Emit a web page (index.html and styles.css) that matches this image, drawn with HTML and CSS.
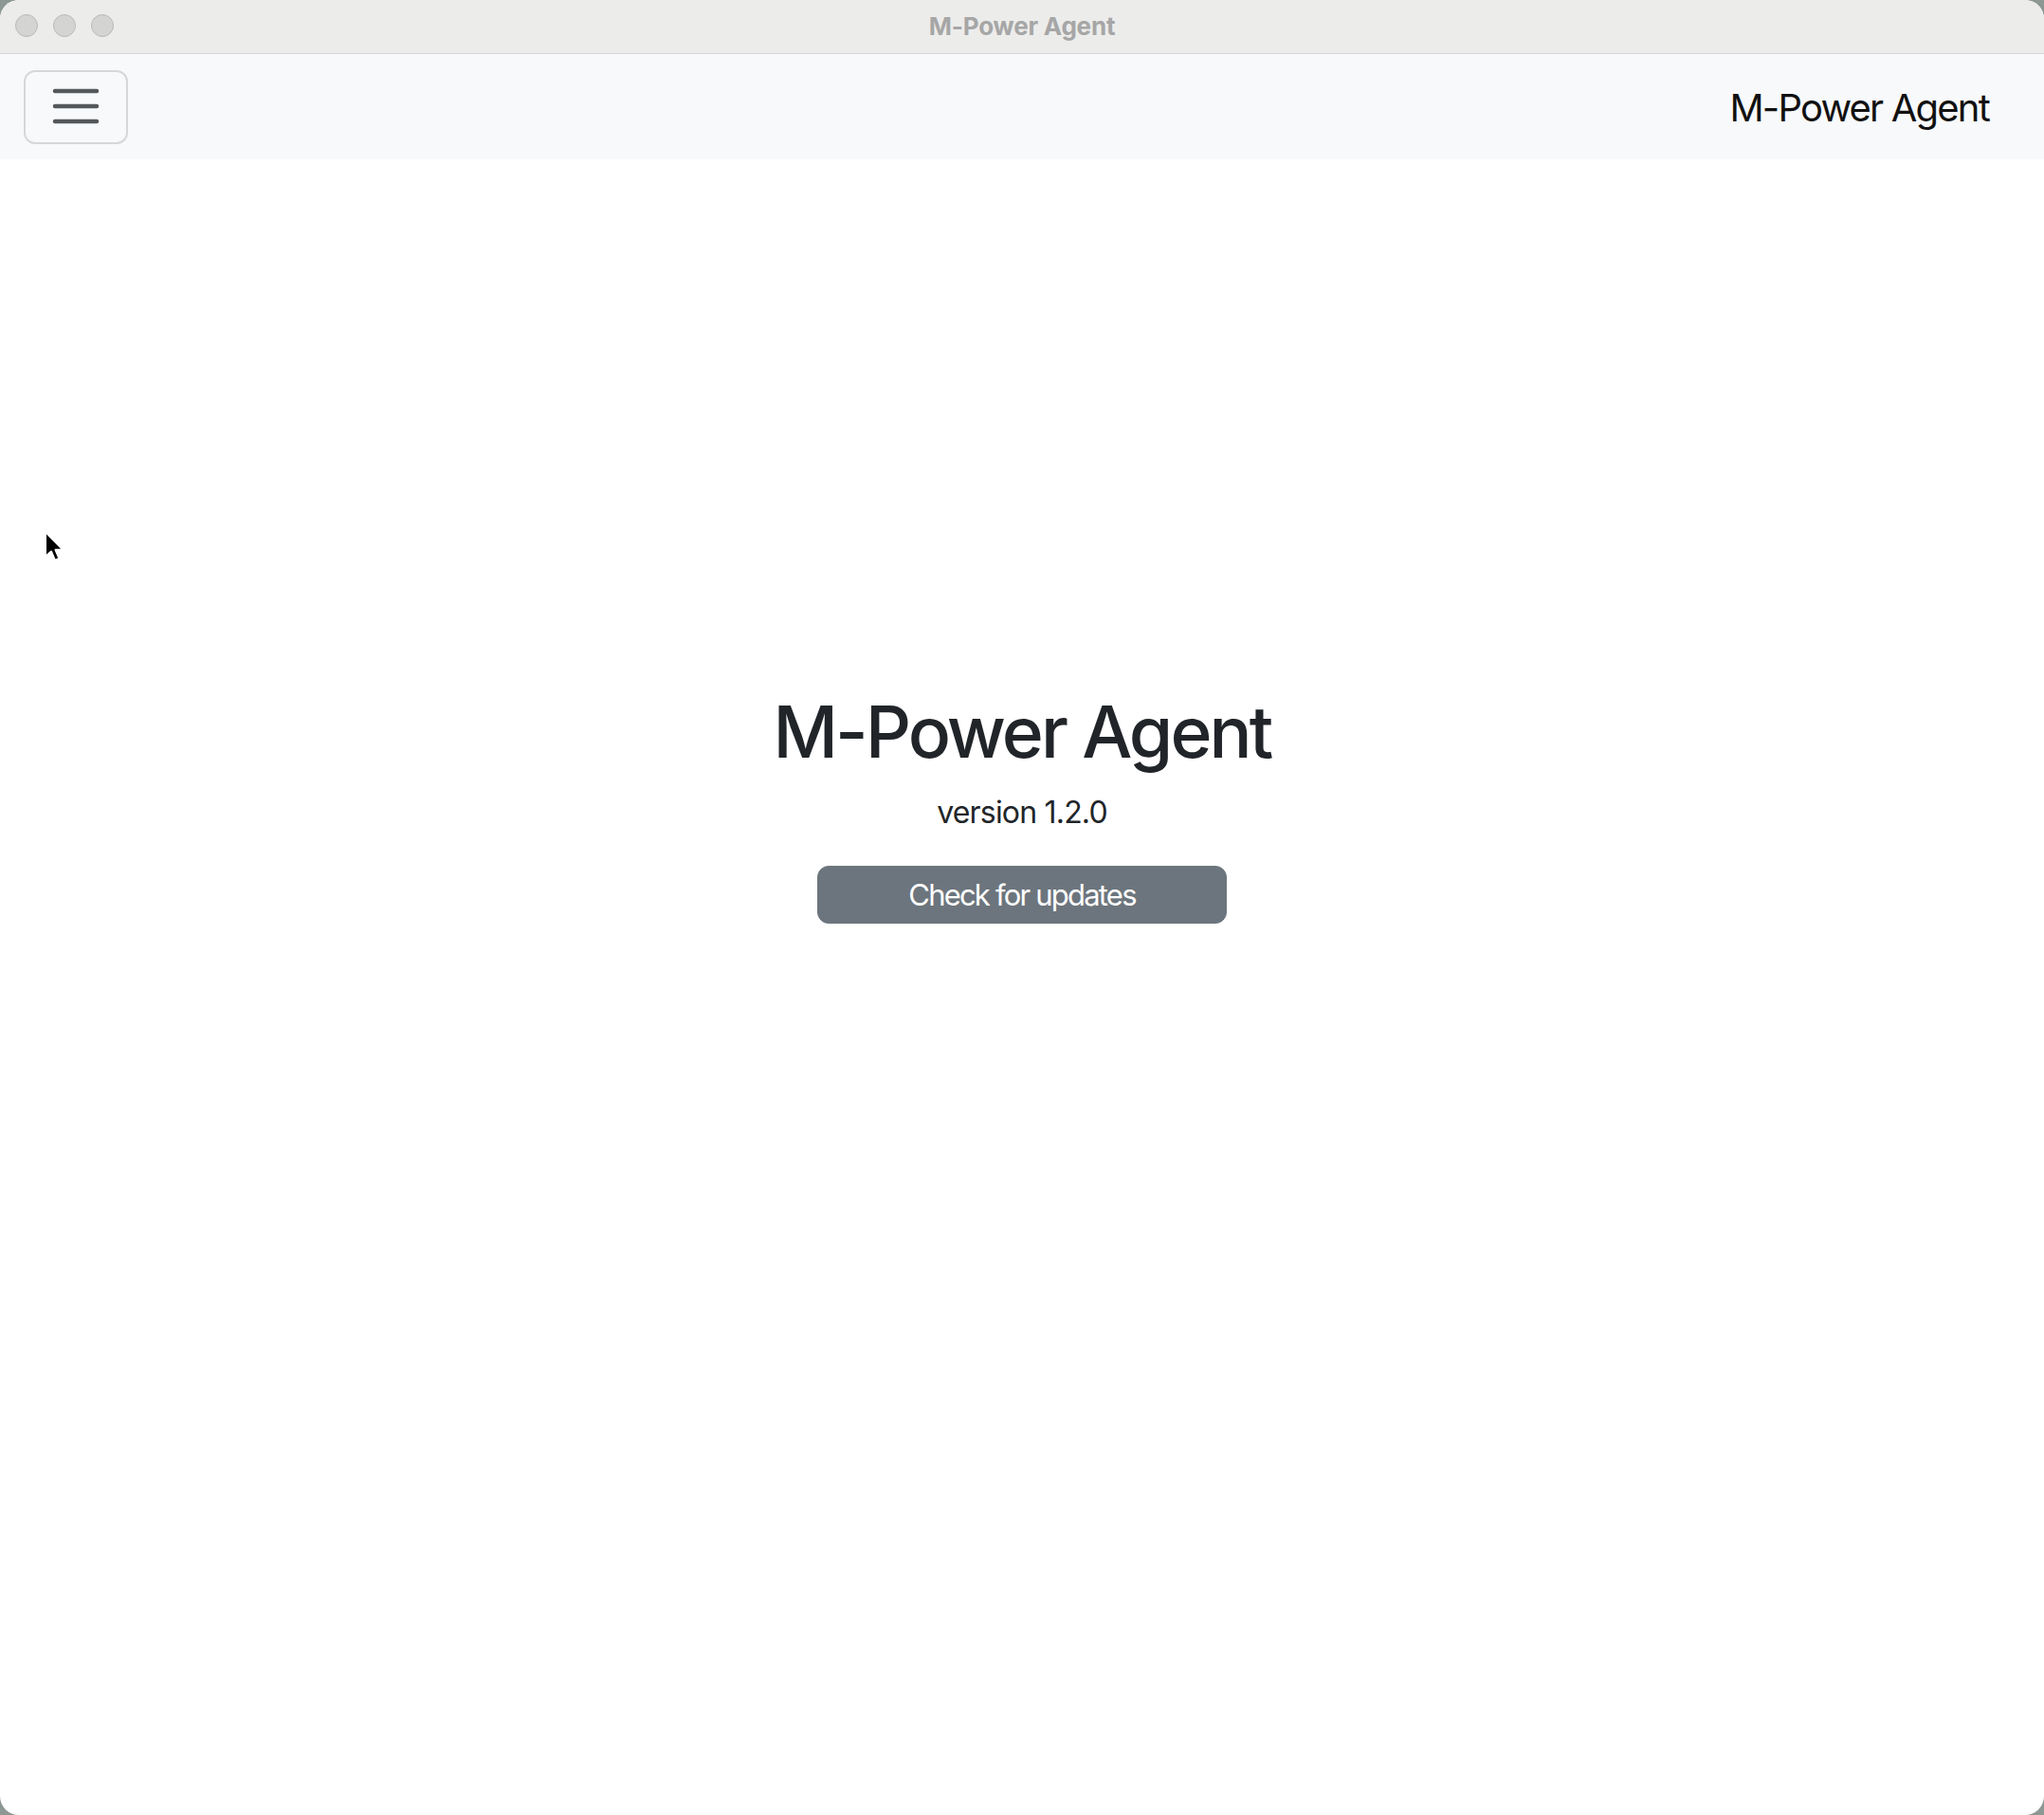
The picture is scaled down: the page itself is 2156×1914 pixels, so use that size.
FILE: index.html
```html
<!DOCTYPE html>
<html lang="en">
<head>
  <meta charset="UTF-8" />
  <title>M-Power Agent</title>
  <meta name="viewport" content="width=device-width, initial-scale=1.0" />
  <link rel="stylesheet" href="styles.css">
</head>
<body>
  <div class="window">
    <div class="titlebar">
      <div class="lights">
        <span class="light"></span>
        <span class="light"></span>
        <span class="light"></span>
      </div>
      <div class="window-title">M-Power Agent</div>
    </div>

    <nav class="navbar">
      <button class="toggler" type="button" aria-label="Menu">
        <svg width="52" height="40" viewBox="0 0 52 40">
          <path d="M4 7 H48 M4 23 H48 M4 39 H48" stroke="#55585b" stroke-width="4.5" stroke-linecap="round" transform="translate(0,-4)" />
        </svg>
      </button>
      <span class="brand">M-Power Agent</span>
    </nav>

    <main class="about">
      <h1>M-Power Agent</h1>
      <p class="version">version 1.2.0</p>
      <button class="btn-update" type="button">Check for updates</button>
    </main>

    <svg class="cursor" width="26" height="38" viewBox="0 0 26 38">
      <path d="M3 2 L3 28 L9 22.5 L13 32 L17.5 30 L13.5 20.8 L21.5 20.8 Z" fill="#000" stroke="#fff" stroke-width="2" stroke-linejoin="round" />
    </svg>
  </div>
</body>
</html>
```

FILE: styles.css
```css
* {
  box-sizing: border-box;
}
html, body {
  margin: 0;
  padding: 0;
}
body {
  background: #8d9793;
  width: 2156px;
  height: 1914px;
  overflow: hidden;
  font-family: Inter, "Noto Sans", "Liberation Sans", sans-serif;
}
.window {
  position: relative;
  width: 2156px;
  height: 1914px;
  background: #fff;
  border-radius: 20px;
  overflow: hidden;
  display: flex;
  flex-direction: column;
}
.titlebar {
  position: relative;
  height: 57px;
  flex: none;
  background: #ececeb;
  border-bottom: 1px solid #d5d5d5;
  display: flex;
  align-items: center;
  justify-content: center;
}
.lights {
  position: absolute;
  left: 16px;
  top: 15px;
  display: flex;
  gap: 16px;
}
.light {
  width: 24px;
  height: 24px;
  border-radius: 50%;
  background: #d4d4d2;
  border: 1px solid #b9b9b7;
}
.window-title {
  font-size: 26px;
  font-weight: 700;
  color: #a6a6a6;
  letter-spacing: -0.2px;
  margin-top: -2px;
}
.navbar {
  flex: none;
  height: 111px;
  background: #f8f9fa;
  display: flex;
  align-items: center;
  justify-content: space-between;
  padding: 0 58px 0 25px;
}
.toggler {
  width: 110px;
  height: 78px;
  background: transparent;
  border: 2px solid #d6d7d8;
  border-radius: 12px;
  display: flex;
  align-items: center;
  justify-content: center;
  padding: 0;
}
.brand {
  font-size: 40px;
  color: #111;
  letter-spacing: -1.8px;
  margin-top: 2px;
}
.about {
  flex: 1;
  display: flex;
  flex-direction: column;
  align-items: center;
  padding-top: 559px;
  color: #212529;
}
.about h1 {
  margin: 0 0 16px;
  font-size: 75px;
  font-weight: 500;
  line-height: 1.2;
  letter-spacing: -2.9px;
}
.version {
  margin: 0 0 32px;
  font-size: 32px;
  line-height: 48px;
  letter-spacing: -0.8px;
}
.btn-update {
  width: 432px;
  height: 61px;
  padding: 4px 0 4px;
  font-family: inherit;
  font-size: 31px;
  line-height: 48px;
  letter-spacing: -1.8px;
  color: #fff;
  background: #6c757d;
  border: 1px solid #6c757d;
  border-radius: 12px;
}
.cursor {
  position: absolute;
  left: 45px;
  top: 559px;
}
```
